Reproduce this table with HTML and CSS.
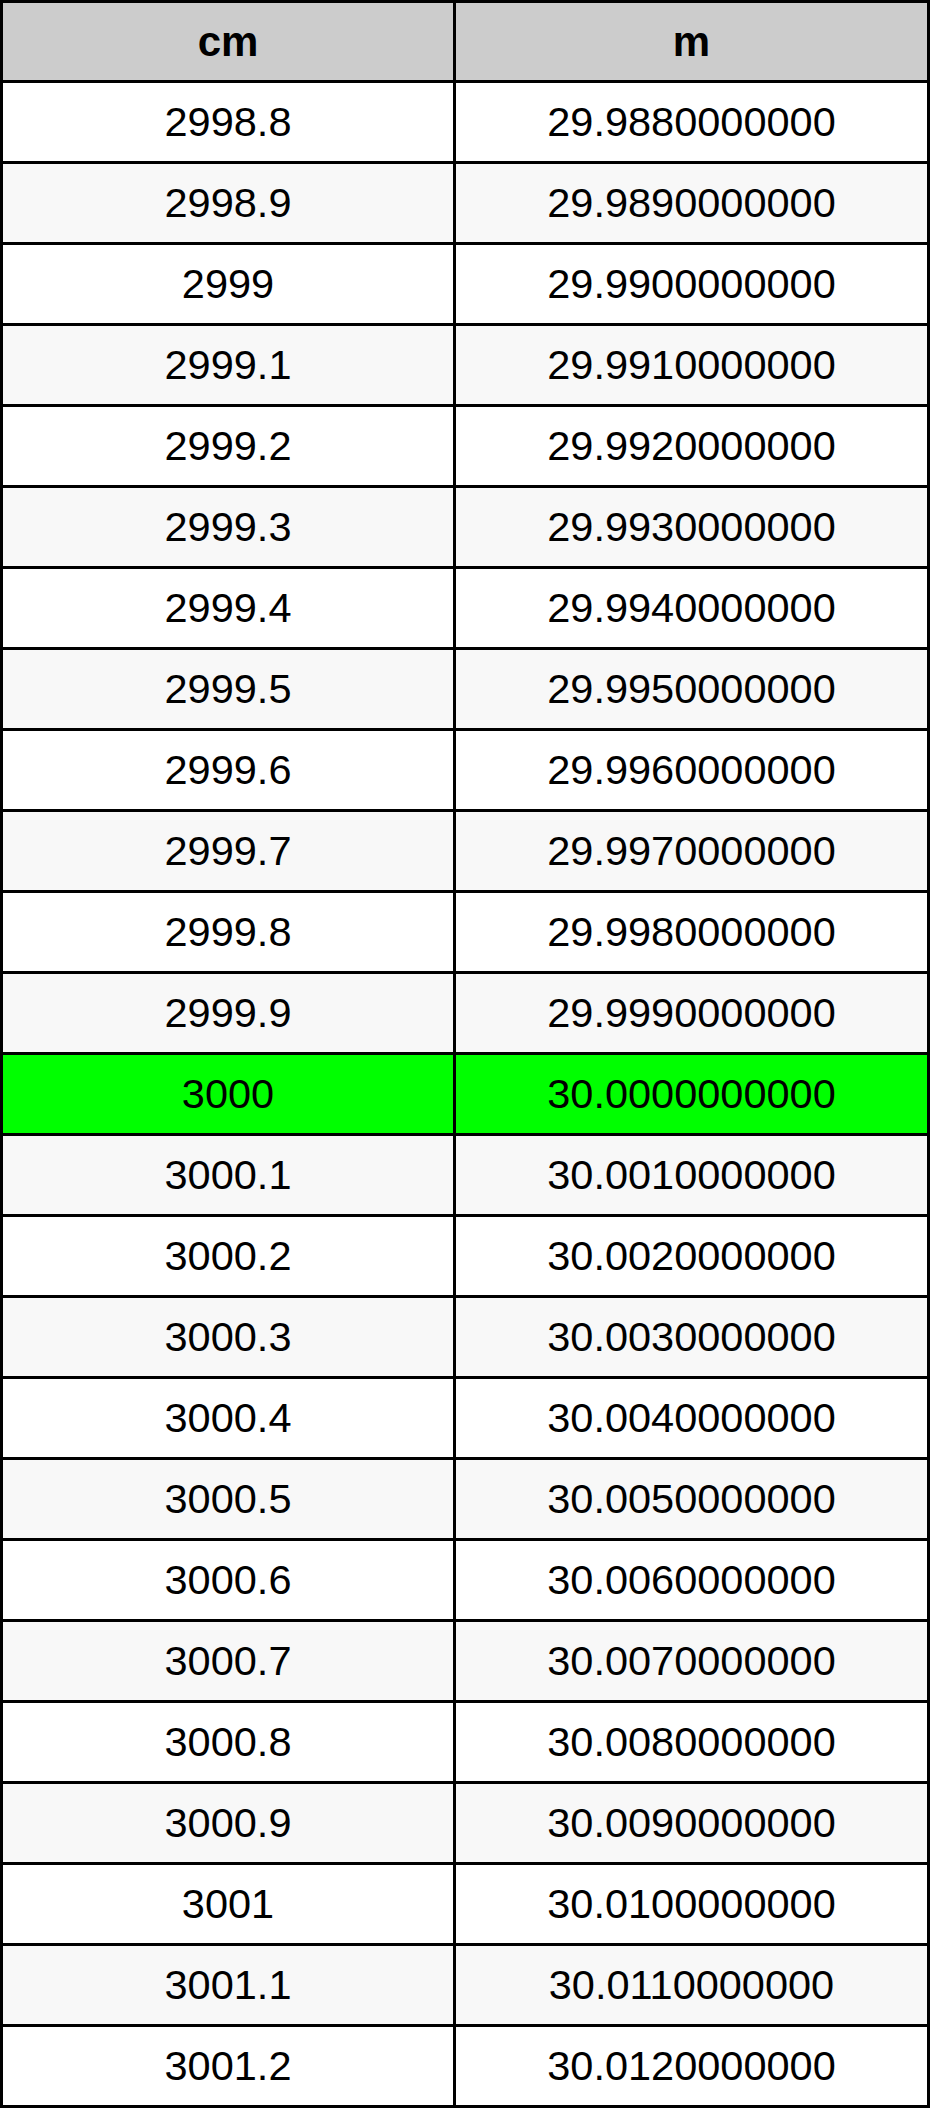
FILE: index.html
```html
<!DOCTYPE html>
<html>
<head>
<meta charset="utf-8">
<title>cm to m</title>
<link rel="stylesheet" href="styles.css">
</head>
<body>
<table class="conv">
<colgroup><col class="c1"><col class="c2"></colgroup>
<thead><tr><th>cm</th><th>m</th></tr></thead>
<tbody>
<tr><td>2998.8</td><td>29.9880000000</td></tr>
<tr><td>2998.9</td><td>29.9890000000</td></tr>
<tr><td>2999</td><td>29.9900000000</td></tr>
<tr><td>2999.1</td><td>29.9910000000</td></tr>
<tr><td>2999.2</td><td>29.9920000000</td></tr>
<tr><td>2999.3</td><td>29.9930000000</td></tr>
<tr><td>2999.4</td><td>29.9940000000</td></tr>
<tr><td>2999.5</td><td>29.9950000000</td></tr>
<tr><td>2999.6</td><td>29.9960000000</td></tr>
<tr><td>2999.7</td><td>29.9970000000</td></tr>
<tr><td>2999.8</td><td>29.9980000000</td></tr>
<tr><td>2999.9</td><td>29.9990000000</td></tr>
<tr class="hl"><td>3000</td><td>30.0000000000</td></tr>
<tr><td>3000.1</td><td>30.0010000000</td></tr>
<tr><td>3000.2</td><td>30.0020000000</td></tr>
<tr><td>3000.3</td><td>30.0030000000</td></tr>
<tr><td>3000.4</td><td>30.0040000000</td></tr>
<tr><td>3000.5</td><td>30.0050000000</td></tr>
<tr><td>3000.6</td><td>30.0060000000</td></tr>
<tr><td>3000.7</td><td>30.0070000000</td></tr>
<tr><td>3000.8</td><td>30.0080000000</td></tr>
<tr><td>3000.9</td><td>30.0090000000</td></tr>
<tr><td>3001</td><td>30.0100000000</td></tr>
<tr><td>3001.1</td><td>30.0110000000</td></tr>
<tr><td>3001.2</td><td>30.0120000000</td></tr>
</tbody>
</table>
</body>
</html>
```

FILE: styles.css
```css
html, body {
  margin: 0;
  padding: 0;
  background: #ffffff;
}

.conv {
  width: 930px;
  table-layout: fixed;
  border-collapse: separate;
  border-spacing: 0;
  border-top: 3px solid #000;
  border-left: 3px solid #000;
  font-family: "Liberation Sans", Arial, sans-serif;
  color: #000;
}

.conv .c1 { width: 453px; }
.conv .c2 { width: 474px; }

.conv th,
.conv td {
  box-sizing: border-box;
  height: 81px;
  padding: 0;
  border-right: 3px solid #000;
  border-bottom: 3px solid #000;
  text-align: center;
  vertical-align: middle;
  line-height: 48px;
}

.conv th {
  background: #cccccc;
  font-weight: bold;
  font-size: 42px;
  height: 80px;
}

.conv td {
  font-size: 41.5px;
  font-weight: normal;
}

.conv tbody tr:nth-child(odd) td { background: #ffffff; }
.conv tbody tr:nth-child(even) td { background: #f8f8f8; }
.conv tbody tr.hl td { background: #00ff00; }
```
